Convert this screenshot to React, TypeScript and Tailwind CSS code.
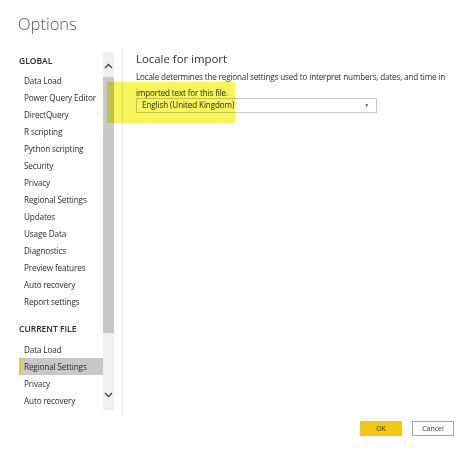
const globalItems = [
  'Data Load',
  'Power Query Editor',
  'DirectQuery',
  'R scripting',
  'Python scripting',
  'Security',
  'Privacy',
  'Regional Settings',
  'Updates',
  'Usage Data',
  'Diagnostics',
  'Preview features',
  'Auto recovery',
  'Report settings',
];

const fileItems = ['Data Load', 'Regional Settings', 'Privacy', 'Auto recovery'];

function Chevron({ up }: { up?: boolean }) {
  return (
    <svg width="9" height="6" viewBox="0 0 9 6" className="block">
      <polyline
        points={up ? '1,5 4.5,1.5 8,5' : '1,1 4.5,4.5 8,1'}
        fill="none"
        stroke="#444"
        strokeWidth="1.3"
      />
    </svg>
  );
}

export default function App() {
  return (
    <div
      className="relative w-[474px] h-[456px] bg-white flex flex-col text-[#2b2b2b] overflow-hidden"
      style={{ fontFamily: '"Open Sans", "Noto Sans", sans-serif' }}
    >
      {/* title */}
      <div className="h-[48px] pl-[18px] pt-[13px] text-[16.5px] leading-[22px] font-light text-[#5a5a5a]">
        Options
      </div>

      {/* main */}
      <div className="flex h-[368px]">
        {/* nav */}
        <div className="w-[103px] pl-[19px] pt-[4px] text-[8.2px] tracking-[-0.15px] leading-[17px]">
          <div className="font-semibold text-[8.5px] tracking-normal">GLOBAL</div>
          <div className="mt-[3px]">
            {globalItems.map((t) => (
              <div key={t} className="pl-[5px] h-[17px] whitespace-nowrap">
                {t}
              </div>
            ))}
          </div>
          <div className="mt-[10px] font-semibold text-[8.5px] tracking-normal">CURRENT FILE</div>
          <div className="mt-[4px]">
            {fileItems.map((t) => (
              <div
                key={t}
                className={
                  t === 'Regional Settings'
                    ? 'h-[17px] pl-[3px] border-l-2 border-[#f2c811] bg-[#c8c8c8] whitespace-nowrap'
                    : 'h-[17px] pl-[5px] whitespace-nowrap'
                }
              >
                {t}
              </div>
            ))}
          </div>
        </div>

        {/* scrollbar */}
        <div className="w-[11px] mt-[4px] mb-[6px] bg-[#f0f0f0] flex flex-col">
          <div className="h-[25px] flex items-center justify-center pt-[2px]">
            <Chevron up />
          </div>
          <div className="h-[256px] bg-[#c8c8c8]" />
          <div className="flex-1 flex flex-col justify-end">
            <div className="h-[30px] flex items-center justify-center">
              <Chevron />
            </div>
          </div>
        </div>

        {/* divider */}
        <div className="ml-[8px] w-px bg-[#e6e6e6]" />

        {/* content */}
        <div className="pl-[13px] flex-1">
          <div className="text-[11.4px] leading-[21px] text-[#333]">Locale for import</div>
          <div className="text-[8.1px] tracking-[-0.15px] leading-[16px] w-[325px]">
            Locale determines the regional settings used to interpret numbers, dates, and time in imported text for
            this file.
          </div>
          <div className="mt-[-3px] w-[241px] h-[15px] border border-[#c8c8c8] flex items-center justify-between pl-[5px] pr-[7px] text-[8.1px] tracking-[-0.1px]">
            <span>English (United Kingdom)</span>
            <span className="text-[5px] text-[#555]">▼</span>
          </div>
        </div>
      </div>

      {/* footer */}
      <div className="flex justify-end gap-[10px] pr-[20px] pt-[5px]">
        <button className="w-[42px] h-[15px] bg-[#f2c811] text-[7px] leading-[15px] text-[#333]">OK</button>
        <button className="w-[42px] h-[15px] bg-white border border-[#a6a6a6] text-[7px] leading-[13px] text-[#333]">
          Cancel
        </button>
      </div>

      {/* highlighter annotation */}
      <div className="absolute left-[107px] top-[82px] w-[128px] h-[41px] bg-[#f6f65a] mix-blend-multiply pointer-events-none" />
    </div>
  );
}
